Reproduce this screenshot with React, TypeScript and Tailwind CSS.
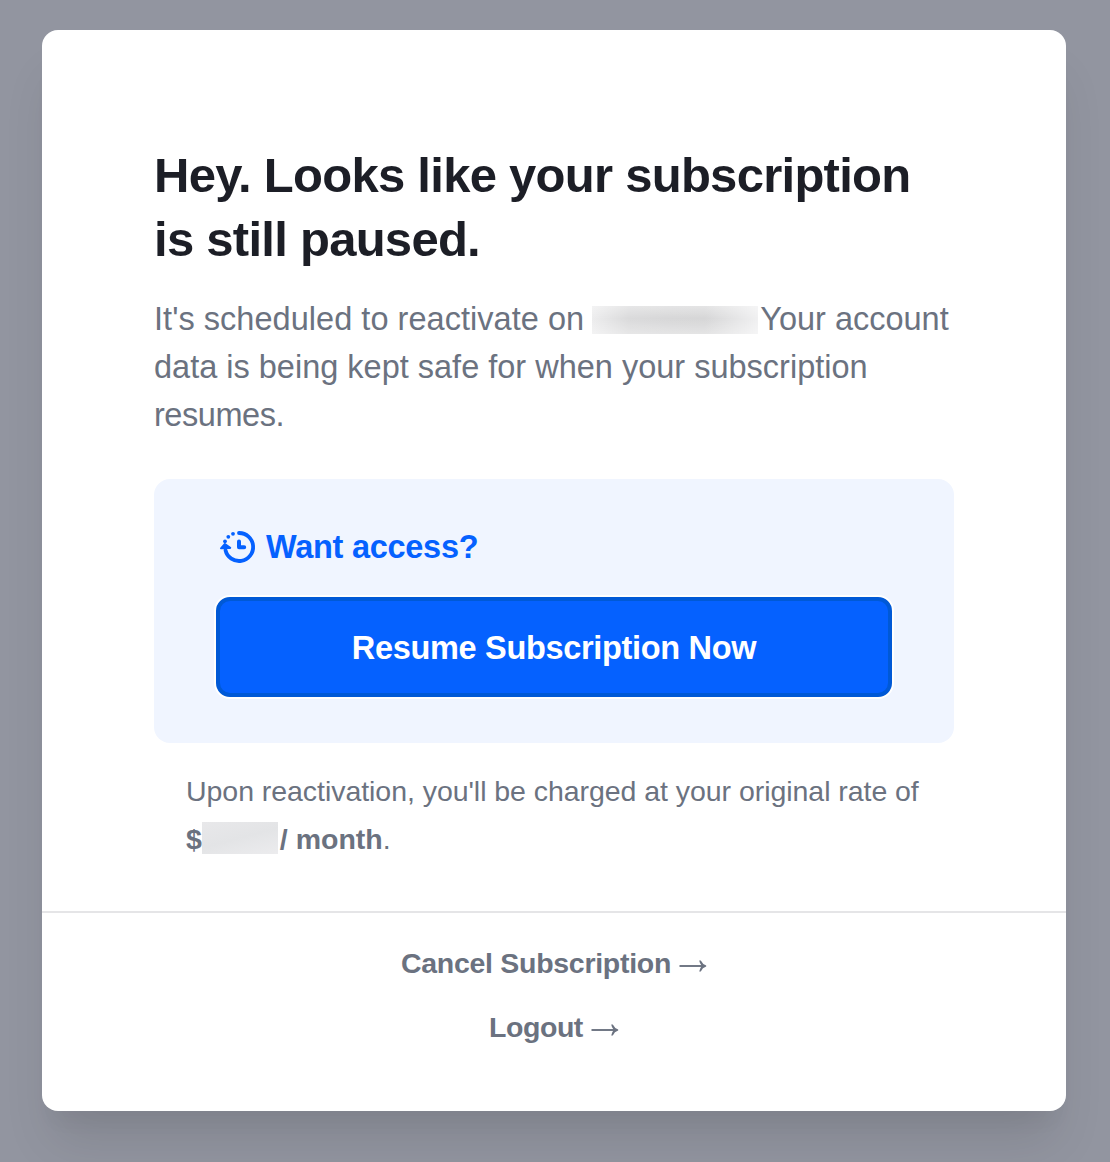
import React from "react";

function HistoryIcon() {
  return (
    <svg width="38" height="36" viewBox="0 0 38 36" fill="none" className="shrink-0">
      <path
        d="M21 4A14 14 0 1 1 7.5 21.2"
        stroke="#0561ff"
        strokeWidth="3.8"
        strokeLinecap="round"
      />
      <path d="M6.9 15L3 19.3L12.2 18.9Z" fill="#0561ff" stroke="#0561ff" strokeWidth="2" strokeLinejoin="round" />
      <path d="M21 12.4V18.3H26.2" stroke="#0561ff" strokeWidth="4" strokeLinecap="round" strokeLinejoin="round" />
      <circle cx="15" cy="4.8" r="1.9" fill="#0561ff" />
      <circle cx="10.3" cy="7.8" r="1.9" fill="#0561ff" />
      <circle cx="7" cy="12.3" r="1.9" fill="#0561ff" />
    </svg>
  );
}

function ArrowRight() {
  return (
    <svg width="28" height="14" viewBox="0 0 28 14" fill="none" className="ml-2 mt-[5px] shrink-0">
      <path d="M0.5 7H24" stroke="currentColor" strokeWidth="1.9" />
      <path d="M20.2 1.6H21.8Q23.4 5.2 27.2 6.4V7.6Q23.4 8.8 21.8 12.4H20.2Q20.7 9.2 22.8 7Q20.7 4.8 20.2 1.6Z" fill="currentColor" />
    </svg>
  );
}

function FooterLink({ children, className }: { children: React.ReactNode; className: string }) {
  return (
    <a href="#" className="flex h-16 items-center justify-center whitespace-pre text-[28.5px] font-bold leading-[48px]">
      <span className={className}>{children}</span>
      <ArrowRight />
    </a>
  );
}

export default function App() {
  return (
    <div className="h-[1162px] w-[1110px] overflow-hidden bg-[#9295a0] pl-[42px] pt-[30px] font-['Liberation_Sans',Arial,sans-serif] text-[#6b7280]">
      <main className="flex h-[1081px] w-[1024px] flex-col rounded-2xl bg-white shadow-[0_40px_50px_-10px_rgba(0,0,0,0.1),0_20px_20px_-10px_rgba(0,0,0,0.04)]">
        <section className="h-[881px] px-28 pt-[113px]">
          <h1 className="whitespace-nowrap text-[49px] font-bold leading-[64px] text-[#1c1e26]">
            <span className="block tracking-[-0.73px]">Hey. Looks like your subscription</span>
            <span className="block tracking-[-0.73px]">is still paused.</span>
          </h1>
          <p className="mt-6 whitespace-nowrap text-[32.5px] leading-[48px]">
            <span className="flex items-center">
              <span className="tracking-[0.04px]">It's scheduled to reactivate on</span>
              <span className="ml-[8px] mr-[2px] mt-[2px] h-7 w-[166px] bg-[linear-gradient(90deg,#ededee,#dadadb_22%,#d7d7d8_45%,#d6d6d7_68%,#e6e6e7_88%,#f0f0f1)]">
                <span className="block h-full bg-[linear-gradient(180deg,rgba(255,255,255,0.35),rgba(255,255,255,0)_45%,rgba(255,255,255,0.35))]" />
              </span>
              <span>Your account</span>
            </span>
            <span className="block">data is being kept safe for when your subscription</span>
            <span className="block tracking-[-0.45px]">resumes.</span>
          </p>
          <div className="mt-10 h-[264px] rounded-2xl bg-[#f0f5ff] px-[62px] pt-[44px]">
            <h2 className="flex h-12 items-center whitespace-nowrap pl-[2px] text-[32.5px] font-bold leading-[48px] text-[#0561ff]">
              <HistoryIcon />
              <span className="ml-[10px] tracking-[-0.27px]">Want access?</span>
            </h2>
            <button className="mt-[26px] flex h-[100px] w-[676px] items-center justify-center whitespace-nowrap rounded-[14px] border-4 border-[#0059d6] bg-[#0561ff] pt-[2px] text-[32.5px] font-bold tracking-[-0.32px] text-white shadow-[0_0_0_2px_#fff]">
              <span>Resume Subscription Now</span>
            </button>
          </div>
          <p className="mt-6 whitespace-nowrap pl-8 text-[28.5px] leading-[48px]">
            <span className="block tracking-[-0.05px]">Upon reactivation, you'll be charged at your original rate of</span>
            <span className="flex items-center">
              <b>$</b>
              <span className="mb-[2px] mr-[2px] h-8 w-[76px] bg-[linear-gradient(165deg,#e8e8ea,#e3e4e6_50%,#ececee)]" />
              <b>/ month</b>.
            </span>
          </p>
        </section>
        <footer className="border-t-2 border-[#e5e5e7] pt-[18px]">
          <FooterLink className="tracking-[-0.28px]">Cancel Subscription</FooterLink>
          <FooterLink className="tracking-[-0.45px]">Logout</FooterLink>
        </footer>
      </main>
    </div>
  );
}
